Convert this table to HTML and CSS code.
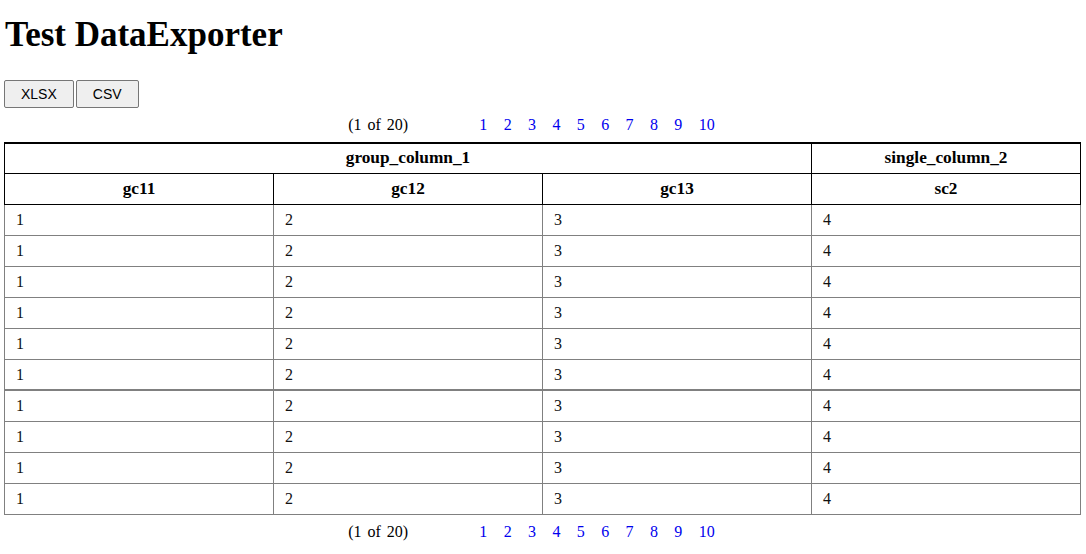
FILE: index.html
```html
<!DOCTYPE html>
<html>
<head>
<meta charset="utf-8">
<title>Test DataExporter</title>
<link rel="stylesheet" href="styles.css">
</head>
<body>
<div class="page">
  <h1 class="title">Test DataExporter</h1>
  <div class="actions">
    <button class="btn">XLSX</button>
    <button class="btn">CSV</button>
  </div>
  <div class="paginator">
    <span class="report">(1 of 20)</span>
    <span class="nav-left"></span>
    <a class="pg">1</a><a class="pg">2</a><a class="pg">3</a><a class="pg">4</a><a class="pg">5</a><a class="pg">6</a><a class="pg">7</a><a class="pg">8</a><a class="pg">9</a><a class="pg">10</a>
    <span class="nav-right"></span>
  </div>
  <table class="grid">
    <thead>
      <tr class="group-row">
        <th colspan="3">group_column_1</th>
        <th>single_column_2</th>
      </tr>
      <tr class="sub-row">
        <th>gc11</th><th>gc12</th><th>gc13</th><th>sc2</th>
      </tr>
    </thead>
    <tbody>
      <tr><td>1</td><td>2</td><td>3</td><td>4</td></tr>
      <tr><td>1</td><td>2</td><td>3</td><td>4</td></tr>
      <tr><td>1</td><td>2</td><td>3</td><td>4</td></tr>
      <tr><td>1</td><td>2</td><td>3</td><td>4</td></tr>
      <tr><td>1</td><td>2</td><td>3</td><td>4</td></tr>
      <tr class="split"><td>1</td><td>2</td><td>3</td><td>4</td></tr>
      <tr><td>1</td><td>2</td><td>3</td><td>4</td></tr>
      <tr><td>1</td><td>2</td><td>3</td><td>4</td></tr>
      <tr><td>1</td><td>2</td><td>3</td><td>4</td></tr>
      <tr><td>1</td><td>2</td><td>3</td><td>4</td></tr>
    </tbody>
  </table>
  <div class="paginator">
    <span class="report">(1 of 20)</span>
    <span class="nav-left"></span>
    <a class="pg">1</a><a class="pg">2</a><a class="pg">3</a><a class="pg">4</a><a class="pg">5</a><a class="pg">6</a><a class="pg">7</a><a class="pg">8</a><a class="pg">9</a><a class="pg">10</a>
    <span class="nav-right"></span>
  </div>
</div>
</body>
</html>
```
FILE: styles.css
```css
html, body {
  margin: 0;
  padding: 0;
  background: #fff;
}
body {
  font-family: "Liberation Serif", "Times New Roman", serif;
  font-size: 16px;
  color: #000;
}
.page {
  padding: 0 5px 0 4px;
}
.title {
  font-size: 35px;
  font-weight: bold;
  line-height: 40px;
  margin: 15px 0 25px 1px;
}
.actions {
  display: flex;
  gap: 2px;
}
.btn {
  font-family: "Liberation Sans", Arial, sans-serif;
  font-size: 14px;
  line-height: 16px;
  height: 28px;
  padding: 0 16px;
  background: #efefef;
  color: #000;
  border: 1px solid #767676;
  border-radius: 2px;
}
.paginator {
  display: flex;
  justify-content: center;
  align-items: center;
  height: 34px;
  line-height: 18px;
}
.report {
  color: #000;
  word-spacing: 2px;
}
.nav-left {
  width: 63px;
}
.nav-right {
  width: 14px;
}
.pg {
  color: #0000ee;
  padding: 0 8.2px;
  cursor: pointer;
}
.grid {
  width: 100%;
  border-collapse: collapse;
  table-layout: fixed;
}
.grid th {
  font-weight: bold;
  font-size: 17.3px;
  text-align: center;
  border: 1px solid #000;
  padding: 6px 10px;
  line-height: 18px;
}
.group-row th {
  border-top: 2px solid #000;
  padding-top: 5px;
}
.grid td {
  border: 1px solid #808080;
  padding: 6px 11px;
  line-height: 18px;
  color: #111;
  text-align: left;
}
.grid tr.split td {
  border-bottom: 2px solid #808080;
  padding-bottom: 5px;
}
```
